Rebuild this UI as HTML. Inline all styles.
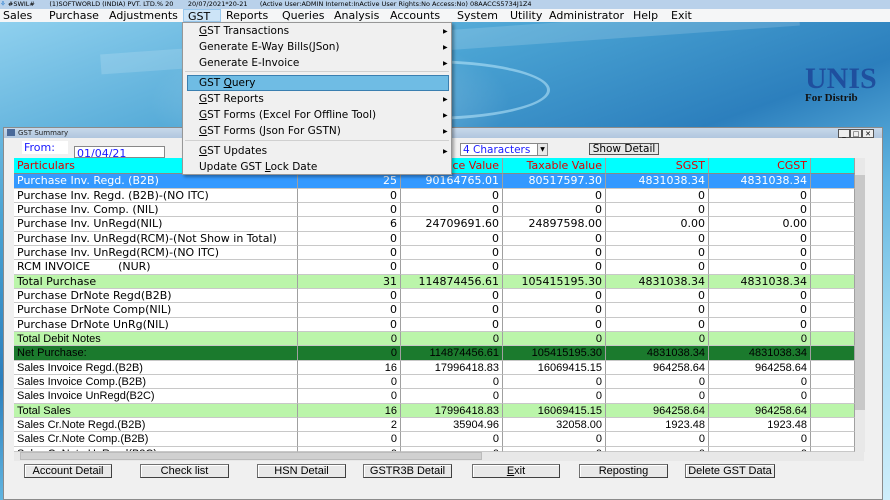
<!DOCTYPE html>
<html><head><meta charset="utf-8"><style>
*{margin:0;padding:0;box-sizing:border-box}
body{width:890px;height:500px;overflow:hidden;position:relative;font-family:"DejaVu Sans","Liberation Sans",sans-serif;background:#6fb6dc}
.a{position:absolute}
#title{left:0;top:0;width:890px;height:9px;background:#b9d1ea;font-size:6.5px;line-height:9px;color:#000;white-space:pre}
#menu{left:0;top:9px;width:890px;height:13px;background:#f5f6f7;font-size:11px;line-height:13px}
#menu span{position:absolute;top:0}
#bg{left:0;top:22px;width:890px;height:478px;background:
radial-gradient(ellipse 180px 70px at 330px 80px,rgba(255,255,255,.35),transparent),
linear-gradient(160deg,#8fd0ee 0%,#4aa3d3 25%,#2c7fbd 45%,#62b5e0 60%,#a8def3 80%,#cfeefb 100%)}
#dd{left:182px;top:22px;width:270px;height:153px;background:#f0f0f0;border:1px solid #979797;box-shadow:2px 2px 3px rgba(0,0,0,.35);font-size:10.5px;z-index:10}
#dd div{position:absolute;left:16px;white-space:nowrap}
#dd .ar{position:absolute;left:260px;font-size:6px}
#win{left:3px;top:127px;width:880px;height:373px;background:#f0f0f0;border:1px solid #8b8b8b}
#wt{left:4px;top:128px;width:878px;height:10px;background:linear-gradient(#c7d8ea,#b0c6de);font-size:7px;line-height:10px;color:#222}
.cell{position:absolute;height:14.33px;font-size:11px;line-height:14px;white-space:nowrap;overflow:hidden;border-right:1.5px solid #a0a0a0;border-bottom:1px solid #c8c8c8;padding:0 3px}
.r{text-align:right}
.btn{position:absolute;top:464px;height:14px;background:#e8e8e8;border:1px solid #707070;border-right-color:#404040;border-bottom-color:#404040;font-family:"Liberation Sans",sans-serif;font-size:11px;line-height:12px;text-align:center;box-shadow:inset 1px 1px #fff}
</style></head><body>
<div class="a" id="bg"></div>
<div class="a" style="left:100px;top:30px;width:700px;height:20px;background:rgba(255,255,255,.15);transform:rotate(-4deg)"></div>
<div class="a" style="left:300px;top:60px;width:250px;height:60px;border-radius:50%;border:3px solid rgba(200,240,255,.5)"></div>
<div class="a" style="left:805px;top:62px;font-family:'Liberation Serif',serif;font-weight:bold;font-size:30px;color:#1f4f9e">UNIS</div>
<div class="a" style="left:805px;top:92px;font-family:'Liberation Serif',serif;font-weight:bold;font-size:11px;color:#111">For Distrib</div>
<div class="a" id="title"><span style="color:#2a7fd0">⚘</span> #SWIL#       (1)SOFTWORLD (INDIA) PVT. LTD.% 20       20/07/2021*20-21      (Active User:ADMIN Internet:InActive User Rights:No Access:No) 08AACCS5734J1Z4</div>
<div class="a" id="menu">
<span style="left:3px">Sales</span><span style="left:49px">Purchase</span><span style="left:109px">Adjustments</span>
<span style="left:183px;width:38px;height:13px;background:#cce4f7;border:1px solid #99c9ef;padding-left:4px">GST</span>
<span style="left:226px">Reports</span><span style="left:282px">Queries</span><span style="left:334px">Analysis</span><span style="left:390px">Accounts</span>
<span style="left:457px">System</span><span style="left:510px">Utility</span><span style="left:549px">Administrator</span><span style="left:633px">Help</span><span style="left:671px">Exit</span>
</div>
<div class="a" id="win"></div>
<div class="a" id="wt"><span style="display:inline-block;width:8px;height:7px;background:#4a6a9a;margin:1px 3px 0 3px;vertical-align:top"></span>GST Summary</div>
<div class="a" style="left:838px;top:129px;width:42px;height:9px;font-size:7px;line-height:8px">
<span style="display:inline-block;width:12px;height:9px;border:1px solid #555;background:#eee;text-align:center">_</span><span style="display:inline-block;width:12px;height:9px;border:1px solid #555;background:#eee;text-align:center">□</span><span style="display:inline-block;width:12px;height:9px;border:1px solid #555;background:#eee;text-align:center">✕</span></div>
<div class="a" style="left:22px;top:141px;width:46px;height:13px;background:#fff;color:#1a1aff;font-size:11px;padding-left:2px">From:</div>
<div class="a" style="left:74px;top:146px;width:91px;height:12px;background:#fff;border:1px solid #888;color:#1a1aff;font-size:11px;line-height:14px;padding-left:2px;overflow:hidden">01/04/21</div>
<div class="a" style="left:460px;top:143px;width:88px;height:13px;background:#fff;border:1px solid #888;color:#1a1aff;font-size:10.5px;line-height:12px;padding-left:2px">4 Characters<span style="position:absolute;right:0;top:0;width:10px;height:11px;background:#e8e8e8;border-left:1px solid #888;font-size:6px;color:#000;text-align:center">▼</span></div>
<div class="a" style="left:589px;top:143px;width:70px;height:12px;background:#e8e8e8;border:1px solid #555;font-size:10.5px;line-height:11px;text-align:center">Show Detail</div>
<div class="a" style="left:855px;top:158px;width:10px;height:294px;background:#e8e8e8"></div>
<div class="a" style="left:855px;top:175px;width:10px;height:235px;background:#c8c8c8"></div>
<div class="a" style="left:14px;top:452px;width:850px;height:9px;background:#e8e8e8"></div>
<div class="a" style="left:20px;top:452px;width:462px;height:8px;background:#d0d0d0;border:1px solid #bbb"></div>
<div id="grid"></div>
<div class="btn" style="left:24px;width:88px">Account Detail</div>
<div class="btn" style="left:140px;width:89px">Check list</div>
<div class="btn" style="left:257px;width:89px">HSN Detail</div>
<div class="btn" style="left:363px;width:89px">GSTR3B Detail</div>
<div class="btn" style="left:472px;width:88px"><u>E</u>xit</div>
<div class="btn" style="left:579px;width:89px">Reposting</div>
<div class="btn" style="left:685px;width:90px;overflow:hidden;white-space:nowrap">Delete GST Data</div>
<div class="a" id="dd">
<div style="top:2px"><u>G</u>ST Transactions</div><span class="ar" style="top:5px">▶</span>
<div style="top:18px">Generate E-Way Bills(JSon)</div><span class="ar" style="top:21px">▶</span>
<div style="top:34px">Generate E-Invoice</div><span class="ar" style="top:37px">▶</span>
<div style="left:2px;top:48px;width:264px;height:1px;border-top:1px solid #d0d0d0"></div>
<div style="left:4px;top:52px;width:262px;height:16px;background:#6fbce4;border:1px solid #3a7fb0"></div>
<div style="top:54px">GST <u>Q</u>uery</div>
<div style="top:70px"><u>G</u>ST Reports</div><span class="ar" style="top:73px">▶</span>
<div style="top:86px"><u>G</u>ST Forms (Excel For Offline Tool)</div><span class="ar" style="top:89px">▶</span>
<div style="top:102px"><u>G</u>ST Forms (Json For GSTN)</div><span class="ar" style="top:105px">▶</span>
<div style="left:2px;top:117px;width:264px;height:1px;border-top:1px solid #d0d0d0"></div>
<div style="top:122px"><u>G</u>ST Updates</div><span class="ar" style="top:125px">▶</span>
<div style="top:138px">Update GST <u>L</u>ock Date</div>
</div>
<script>
var cols=[14,298,401,503,606,709,811,855];
var hdr=["Particulars","","ice Value","Taxable Value","SGST","CGST",""];
var rows=[
["Purchase Inv. Regd. (B2B)","25","90164765.01","80517597.30","4831038.34","4831038.34","s"],
["Purchase Inv. Regd. (B2B)-(NO ITC)","0","0","0","0","0",""],
["Purchase Inv. Comp. (NIL)","0","0","0","0","0",""],
["Purchase Inv. UnRegd(NIL)","6","24709691.60","24897598.00","0.00","0.00",""],
["Purchase Inv. UnRegd(RCM)-(Not Show in Total)","0","0","0","0","0",""],
["Purchase Inv. UnRegd(RCM)-(NO ITC)","0","0","0","0","0",""],
["RCM INVOICE&nbsp;&nbsp;&nbsp;&nbsp;&nbsp;&nbsp;&nbsp;&nbsp;(NUR)","0","0","0","0","0",""],
["Total Purchase","31","114874456.61","105415195.30","4831038.34","4831038.34","g"],
["Purchase DrNote Regd(B2B)","0","0","0","0","0",""],
["Purchase DrNote Comp(NIL)","0","0","0","0","0",""],
["Purchase DrNote UnRg(NIL)","0","0","0","0","0",""],
["Total Debit Notes","0","0","0","0","0","g"],
["Net Purchase:","0","114874456.61","105415195.30","4831038.34","4831038.34","d"],
["Sales Invoice Regd.(B2B)","16","17996418.83","16069415.15","964258.64","964258.64",""],
["Sales Invoice Comp.(B2B)","0","0","0","0","0",""],
["Sales Invoice UnRegd(B2C)","0","0","0","0","0",""],
["Total Sales","16","17996418.83","16069415.15","964258.64","964258.64","g"],
["Sales Cr.Note Regd.(B2B)","2","35904.96","32058.00","1923.48","1923.48",""],
["Sales Cr.Note Comp.(B2B)","0","0","0","0","0",""],
["Sales Cr.Note UnRegd(B2C)","0","0","0","0","0",""]];
var h="";
for(var c=0;c<7;c++){h+='<div class="cell'+(c>1?' r':'')+'" style="left:'+cols[c]+'px;top:158px;width:'+(cols[c+1]-cols[c])+'px;height:16px;background:#00ffff;color:#e00000;font-size:11px;line-height:16px;border-bottom:1px solid #888">'+hdr[c]+'</div>';}
rows.forEach(function(r,i){var t=174.33+i*14.33;if(t>452)return;var ty=r[6];
var bg=ty=="s"?"#3399ff":ty=="g"?"#bbf5aa":ty=="d"?"#1b7a2d":"#fff";var fg=ty=="s"?"#fff":"#000";
var ht=Math.min(14.33,452-t);var fs=i>=11?"font-family:'Liberation Sans Narrow','Liberation Sans',sans-serif;font-size:11px;":"";
for(var c=0;c<7;c++){h+='<div class="cell'+(c>0?' r':'')+'" style="'+fs+'left:'+cols[c]+'px;top:'+t+'px;width:'+(cols[c+1]-cols[c])+'px;height:'+ht+'px;background:'+bg+';color:'+fg+'">'+(c<6?r[c]:'')+'</div>';}});
document.getElementById('grid').innerHTML=h;
</script>
</body></html>
